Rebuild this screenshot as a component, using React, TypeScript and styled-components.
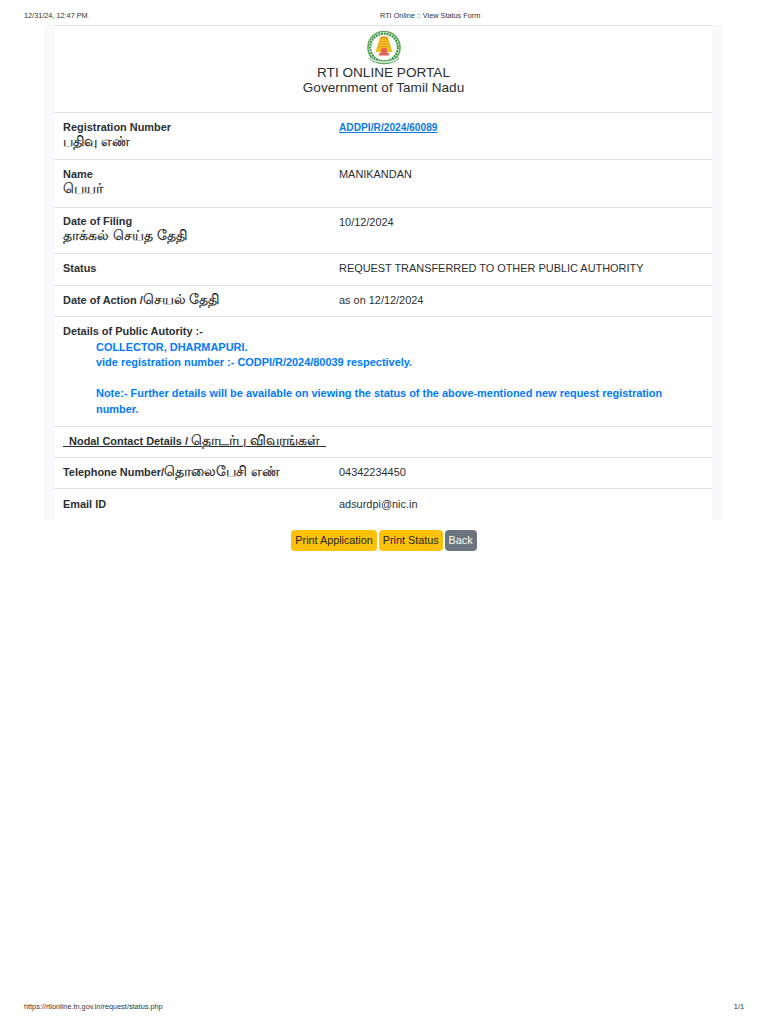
import React from "react";
import styled, { createGlobalStyle } from "styled-components";

const Global = createGlobalStyle`
  html, body { margin: 0; padding: 0; background: #fff; }
  body { font-family: "Liberation Sans", Arial, sans-serif; color: #212529; }
`;
const Page = styled.div`
  width: 768px; height: 1024px; display: flex; flex-direction: column; overflow: hidden;
`;
const PrintBar = styled.div`
  height: 25px; padding: 11px 24px 0; box-sizing: border-box;
  display: grid; grid-template-columns: 356px auto; font-size: 7.3px; line-height: 9px; color: #333;
`;
const PrintRight = styled.span`text-align: right;`;
const Panel = styled.main`
  margin: 0 45px 0 44px; padding: 0 11px; background: #f8f9fa;
`;
const Inner = styled.div`
  background: #fff; border-top: 1px solid #dee2e6;
`;
const Head = styled.header`
  height: 86px; box-sizing: border-box; display: flex; flex-direction: column; align-items: center;
  font-size: 13.6px; line-height: 15px; color: #2b2f33; padding-top: 5px;
`;
const Emblem = styled.svg`width: 36px; height: 34px; display: block;`;
const Row = styled.section<{ $h: number; $top?: number }>`
  height: ${p => p.$h}px; box-sizing: border-box; border-top: 1px solid #dee2e6;
  display: grid; grid-template-columns: 276px 1fr; padding: ${p => p.$top ?? 7}px 8px 0; font-size: 10.93px; line-height: 15px;
`;
const Label = styled.div`font-weight: 700; color: #2b2f33;`;
const Tamil = styled.div`
  font-weight: 400; font-size: 13.6px; line-height: 14.5px; color: #1c1c1c; -webkit-text-stroke: 0.25px #1c1c1c;
`;
const TamilInline = styled.span`
  font-weight: 400; font-size: 13.6px; line-height: 1; color: #1c1c1c; -webkit-text-stroke: 0.25px #1c1c1c;
`;
const Value = styled.div<{ $shift?: number }>`color: #2b2f33; padding-top: ${p => p.$shift ?? 0}px;`;
const RegLink = styled.a`color: #0d7bdc; font-weight: 700; font-size: 10.2px; text-decoration: underline;`;
const DetailRow = styled.section`
  height: 110px; box-sizing: border-box; border-top: 1px solid #dee2e6;
  padding: 7px 8px 0; font-size: 10.93px; line-height: 15.5px;
`;
const Blue = styled.div`
  color: #007bff; font-weight: 700; padding-left: 33px; padding-right: 34px;
`;
const Gap = styled.div`height: 15.5px;`;
const Nodal = styled.span`font-weight: 700; text-decoration: underline; white-space: pre;`;
const Buttons = styled.div`
  display: flex; justify-content: center; gap: 2px; margin-top: 10px;
`;
const Btn = styled.button<{ $dark?: boolean }>`
  height: 21px; padding: 0 4px 1px; border: none; border-radius: 4px; font: 10.8px "Liberation Sans", Arial, sans-serif;
  background: ${p => (p.$dark ? "#6c757d" : "#ffc107")};
  color: ${p => (p.$dark ? "#fff" : "#212529")};
`;
const Footer = styled.div`
  margin-top: auto; height: 22px; padding: 0 24px; display: flex; justify-content: space-between;
  font-size: 7.3px; line-height: 9px; color: #333;
`;

const Logo = () => (
  <Emblem viewBox="0 0 36 34" aria-hidden="true">
    <circle cx="18" cy="16.5" r="16" fill="#fff" stroke="#5aa75a" strokeWidth="1.6" />
    <circle cx="18" cy="16.5" r="13.8" fill="none" stroke="#2f8f3a" strokeWidth="2" strokeDasharray="2 .8" />
    <path d="M13.8 6h8.4l.9 4 1.4 4.5 2 6.5H9.5l2-6.5 1.4-4.5z" fill="#f7bd22" />
    <path d="M14 8h8M13.4 10.5h9.2M12.6 13h10.8M11.6 15.5h12.8" stroke="#d6971a" strokeWidth=".7" />
    <path d="M15 5.500h6v1.200h-6z" fill="#c98a10" />
    <circle cx="18" cy="20" r="3.200" fill="#e8604f" />
    <path d="M13.500 22h9l1 2.500h-11z" fill="#e0635a" />
    <path d="M4.500 26c5 5.500 22 5.500 27 0l1.200 1.800c-5.600 6-23.800 6-29.400 0z" fill="#fff" stroke="#3f9a46" strokeWidth=".8" />
  </Emblem>
);

export default function App() {
  return (
    <Page>
      <Global />
      <PrintBar>
        <span>12/31/24, 12:47 PM</span>
        <span>RTI Online :: View Status Form</span>
      </PrintBar>
      <Panel>
        <Inner>
          <Head>
            <Logo />
            <span>RTI ONLINE PORTAL</span>
            <span>Government of Tamil Nadu</span>
          </Head>
          <Row $h={47}>
            <Label>Registration Number<Tamil>பதிவு எண்</Tamil></Label>
            <Value><RegLink href="#">ADDPI/R/2024/60089</RegLink></Value>
          </Row>
          <Row $h={48}>
            <Label>Name<Tamil>பெயர்</Tamil></Label>
            <Value>MANIKANDAN</Value>
          </Row>
          <Row $h={46} $top={6}>
            <Label>Date of Filing<Tamil>தாக்கல் செய்த தேதி</Tamil></Label>
            <Value $shift={1}>10/12/2024</Value>
          </Row>
          <Row $h={32}>
            <Label>Status</Label>
            <Value>REQUEST TRANSFERRED TO OTHER PUBLIC AUTHORITY</Value>
          </Row>
          <Row $h={31}>
            <Label>Date of Action /<TamilInline>செயல் தேதி</TamilInline></Label>
            <Value>as on 12/12/2024</Value>
          </Row>
          <DetailRow>
            <Label>Details of Public Autority :-</Label>
            <Blue>COLLECTOR, DHARMAPURI.</Blue>
            <Blue>vide registration number :- CODPI/R/2024/80039 respectively.</Blue>
            <Gap />
            <Blue>Note:- Further details will be available on viewing the status of the above-mentioned new request registration number.</Blue>
          </DetailRow>
          <Row $h={31}>
            <Label><Nodal>{"  Nodal Contact Details / "}<TamilInline>தொடர்பு விவரங்கள்</TamilInline>{"  "}</Nodal></Label>
          </Row>
          <Row $h={31}>
            <Label>Telephone Number/<TamilInline>தொலைபேசி எண்</TamilInline></Label>
            <Value>04342234450</Value>
          </Row>
          <Row $h={32} $top={8}>
            <Label>Email ID</Label>
            <Value>adsurdpi@nic.in</Value>
          </Row>
        </Inner>
      </Panel>
      <Buttons>
        <Btn>Print Application</Btn>
        <Btn>Print Status</Btn>
        <Btn $dark>Back</Btn>
      </Buttons>
      <Footer>
        <span>https://rtionline.tn.gov.in/request/status.php</span>
        <PrintRight>1/1</PrintRight>
      </Footer>
    </Page>
  );
}
